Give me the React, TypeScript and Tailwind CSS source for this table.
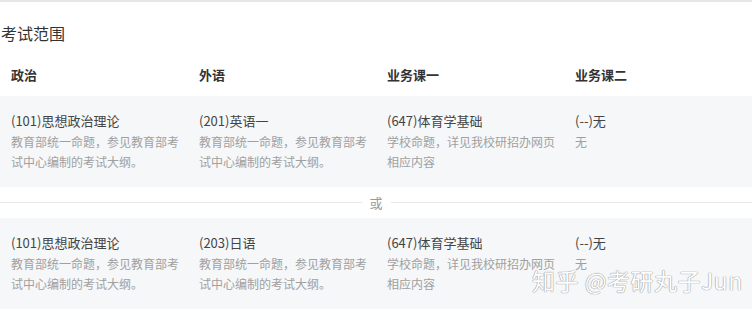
const font = { fontFamily: '"Noto Sans CJK SC", "Noto Sans", sans-serif' };

type Course = {
  title: string;
  note: string;
};

const headers = ["政治", "外语", "业务课一", "业务课二"];

const groups: Course[][] = [
  [
    { title: "(101)思想政治理论", note: "教育部统一命题，参见教育部考试中心编制的考试大纲。" },
    { title: "(201)英语一", note: "教育部统一命题，参见教育部考试中心编制的考试大纲。" },
    { title: "(647)体育学基础", note: "学校命题，详见我校研招办网页相应内容" },
    { title: "(--)无", note: "无" },
  ],
  [
    { title: "(101)思想政治理论", note: "教育部统一命题，参见教育部考试中心编制的考试大纲。" },
    { title: "(203)日语", note: "教育部统一命题，参见教育部考试中心编制的考试大纲。" },
    { title: "(647)体育学基础", note: "学校命题，详见我校研招办网页相应内容" },
    { title: "(--)无", note: "无" },
  ],
];

const CourseRow = ({ courses }: { courses: Course[] }) => (
  <div className="grid grid-cols-4 bg-[#f6f7f9] pt-[14px] pb-[15px]">
    {courses.map((c, i) => (
      <div key={i} className="pl-[11px] pr-[6px]">
        <div className="text-[13px] leading-[22px] text-[#444]">{c.title}</div>
        <div className="text-[12px] leading-[20px] text-[#a0a0a0]">{c.note}</div>
      </div>
    ))}
  </div>
);

export default function App() {
  return (
    <div className="relative w-[752px] h-[316px] bg-white overflow-hidden" style={font}>
      <div className="border-t-2 border-[#e6e6e6]" />
      <div className="pt-[19px] pl-[1px] text-[16px] leading-[24px] text-[#333]">考试范围</div>
      <div className="mt-[9px] h-[42px] grid grid-cols-4 items-center">
        {headers.map((h) => (
          <div key={h} className="pl-[11px] text-[13px] font-bold text-[#333]">
            {h}
          </div>
        ))}
      </div>
      <CourseRow courses={groups[0]} />
      <div className="h-[31px] flex items-center">
        <div className="flex-1 h-px bg-[#e8e8e8]" />
        <span className="px-[8px] text-[13px] text-[#999]">或</span>
        <div className="flex-1 h-px bg-[#e8e8e8]" />
      </div>
      <CourseRow courses={groups[1]} />
      <div className="absolute left-[532px] top-[264px] text-[23px] leading-[32px] text-white tracking-[0.5px] [text-shadow:0_0_1px_#888,0_0_1px_#888]">
        知乎 @考研丸子Jun
      </div>
    </div>
  );
}
